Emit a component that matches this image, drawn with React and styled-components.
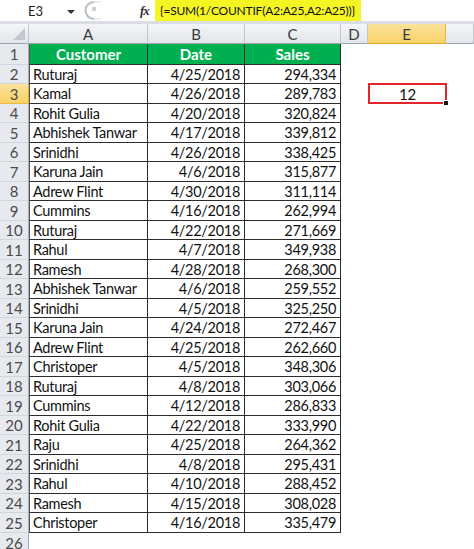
import React from 'react';
import styled, { createGlobalStyle, css } from 'styled-components';

const GlobalStyle = createGlobalStyle`
  html, body {
    margin: 0;
    padding: 0;
    background: #ffffff;
  }
  body {
    font-family: Lato, "Open Sans", sans-serif;
  }
`;

const Sheet = styled.div`
  width: 474px;
  height: 549px;
  overflow: hidden;
  background: #ffffff;
`;

const FormulaBar = styled.div`
  display: flex;
  align-items: stretch;
  height: 21px;
  background: #ffffff;
`;

const NameBox = styled.div`
  width: 84px;
  display: flex;
  align-items: center;
  padding-left: 28px;
  box-sizing: border-box;
  font-size: 13px;
  color: #222;
  gap: 24px;
`;

const Caret = styled.span`
  width: 0;
  height: 0;
  border-left: 4px solid transparent;
  border-right: 4px solid transparent;
  border-top: 4px solid #333;
  margin-top: 2px;
`;

const Grip = styled.div`
  width: 56px;
  display: flex;
  align-items: center;
`;

const FxLabel = styled.div`
  width: 15px;
  display: flex;
  align-items: center;
  font-family: "Liberation Serif", serif;
  font-style: italic;
  font-weight: bold;
  font-size: 13px;
  color: #333;
  letter-spacing: -1px;
`;

const FormulaText = styled.div`
  flex: none;
  background: #f5f523;
  display: flex;
  align-items: center;
  padding: 0 6px 0 5px;
  font-size: 12px;
  letter-spacing: -0.2px;
  color: #111;
  white-space: nowrap;
`;

const Divider = styled.div`
  height: 3px;
  background: #dadde2;
`;

const Grid = styled.div`
  display: grid;
  grid-template-columns: 29px 119px 97px 96px 27px 78px 1fr;
`;

const Cell = styled.div`
  box-sizing: border-box;
  display: flex;
  align-items: center;
  height: ${p => p.$h}px;
  font-size: 14.5px;
  letter-spacing: -0.3px;
  color: #111;
  white-space: nowrap;
  position: relative;
  justify-content: ${p => (p.$align === 'right' ? 'flex-end' : 'flex-start')};
  padding: 0 4px 0 3px;

  ${p => p.$boxed && css`
    border-right: 1px solid #2b2b2b;
    border-bottom: 1px solid #2b2b2b;
  `}
  ${p => p.$first && css`
    border-left: 1px solid #555;
  `}
`;

const HeadCell = styled.div`
  box-sizing: border-box;
  height: 20px;
  display: flex;
  align-items: center;
  justify-content: center;
  font-size: 15px;
  color: #3a3a3a;
  background: ${p => (p.$selected
    ? 'linear-gradient(#fbe39c, #f8d266)'
    : 'linear-gradient(#f4f5f7, #e2e5ea)')};
  border-right: 1px solid ${p => (p.$selected ? '#e9b84a' : '#c3c7cd')};
  border-bottom: 1px solid ${p => (p.$selected ? '#e2a936' : '#9ea4ad')};
`;

const Corner = styled(HeadCell)`
  position: relative;
  &::after {
    content: '';
    position: absolute;
    right: 3px;
    bottom: 3px;
    width: 0;
    height: 0;
    border-left: 12px solid transparent;
    border-bottom: 12px solid #c4c8ce;
  }
`;

const RowHead = styled.div`
  box-sizing: border-box;
  height: ${p => p.$h}px;
  display: flex;
  align-items: center;
  justify-content: center;
  font-size: 15px;
  color: #4a4a4a;
  background: ${p => (p.$selected ? 'linear-gradient(#fbe39c, #f8d266)' : '#e6e9ee')};
  border-right: 1px solid ${p => (p.$selected ? '#e2a936' : '#a9aeb6')};
  border-bottom: 1px solid ${p => (p.$selected ? '#e9b84a' : '#d2d6dc')};
`;

const GreenCell = styled.div`
  box-sizing: border-box;
  height: 21px;
  display: flex;
  align-items: center;
  justify-content: center;
  background: #00b050;
  color: #ffffff;
  font-weight: bold;
  font-size: 15px;
  border-right: 1px solid #2b2b2b;
  border-bottom: 1px solid #2b2b2b;
  ${p => p.$first && css`
    border-left: 1px solid #555;
  `}
`;

const ActiveBox = styled.div`
  position: absolute;
  left: 0;
  top: -1px;
  right: -1px;
  bottom: 0;
  border: 2px solid #e0262a;
  display: flex;
  align-items: center;
  justify-content: center;
  font-size: 15px;
  color: #111;
  &::after {
    content: '';
    position: absolute;
    right: -4px;
    bottom: -4px;
    width: 4px;
    height: 4px;
    background: #111;
    border: 1px solid #fff;
  }
`;

const rows = [
  ['Ruturaj', '4/25/2018', '294,334'],
  ['Kamal', '4/26/2018', '289,783'],
  ['Rohit Gulia', '4/20/2018', '320,824'],
  ['Abhishek Tanwar', '4/17/2018', '339,812'],
  ['Srinidhi', '4/26/2018', '338,425'],
  ['Karuna Jain', '4/6/2018', '315,877'],
  ['Adrew Flint', '4/30/2018', '311,114'],
  ['Cummins', '4/16/2018', '262,994'],
  ['Ruturaj', '4/22/2018', '271,669'],
  ['Rahul', '4/7/2018', '349,938'],
  ['Ramesh', '4/28/2018', '268,300'],
  ['Abhishek Tanwar', '4/6/2018', '259,552'],
  ['Srinidhi', '4/5/2018', '325,250'],
  ['Karuna Jain', '4/24/2018', '272,467'],
  ['Adrew Flint', '4/25/2018', '262,660'],
  ['Christoper', '4/5/2018', '348,306'],
  ['Ruturaj', '4/8/2018', '303,066'],
  ['Cummins', '4/12/2018', '286,833'],
  ['Rohit Gulia', '4/22/2018', '333,990'],
  ['Raju', '4/25/2018', '264,362'],
  ['Srinidhi', '4/8/2018', '295,431'],
  ['Rahul', '4/10/2018', '288,452'],
  ['Ramesh', '4/15/2018', '308,028'],
  ['Christoper', '4/16/2018', '335,479'],
];

const columns = ['A', 'B', 'C', 'D', 'E', ''];

const GripIcon = () => (
  <svg width="18" height="21" viewBox="0 0 18 21">
    <path d="M10 2 A8.5 8.5 0 0 0 10 19" fill="none" stroke="#b9bdc3" strokeWidth="2" />
    <path d="M10 2 L17 2 M10 19 L17 19" stroke="#d8dbe0" strokeWidth="1" />
    <path d="M8 8 h4 M8 10 h4" stroke="#9aa0a8" strokeWidth="1" />
  </svg>
);

const App = () => (
  <Sheet>
    <GlobalStyle />
    <FormulaBar>
      <NameBox>
        E3
        <Caret />
      </NameBox>
      <Grip>
        <GripIcon />
      </Grip>
      <FxLabel>fx</FxLabel>
      <FormulaText>{'{=SUM(1/COUNTIF(A2:A25,A2:A25))}'}</FormulaText>
    </FormulaBar>
    <Divider />
    <Grid>
      <Corner />
      {columns.map((c, i) => (
        <HeadCell key={i} $selected={c === 'E'}>{c}</HeadCell>
      ))}

      <RowHead $h={21}>1</RowHead>
      <GreenCell $first>Customer</GreenCell>
      <GreenCell>Date</GreenCell>
      <GreenCell>Sales</GreenCell>
      <Cell $h={21} />
      <Cell $h={21} />
      <Cell $h={21} />

      {rows.map((r, i) => {
        const n = i + 2;
        const h = i % 2 === 0 ? 19 : 20;
        return (
          <React.Fragment key={n}>
            <RowHead $h={h} $selected={n === 3}>{n}</RowHead>
            <Cell $h={h} $boxed $first>{r[0]}</Cell>
            <Cell $h={h} $boxed $align="right">{r[1]}</Cell>
            <Cell $h={h} $boxed $align="right">{r[2]}</Cell>
            <Cell $h={h} />
            <Cell $h={h}>
              {n === 3 && <ActiveBox>12</ActiveBox>}
            </Cell>
            <Cell $h={h} />
          </React.Fragment>
        );
      })}

      <RowHead $h={20}>26</RowHead>
      <Cell $h={20} />
      <Cell $h={20} />
      <Cell $h={20} />
      <Cell $h={20} />
      <Cell $h={20} />
      <Cell $h={20} />
    </Grid>
  </Sheet>
);

export default App;
